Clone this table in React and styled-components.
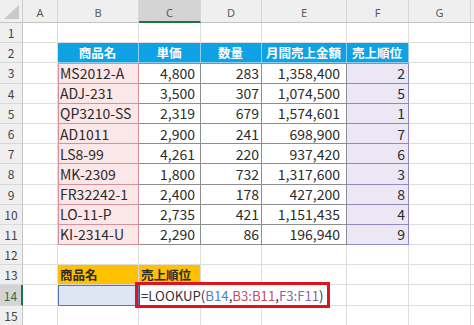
import styled, { createGlobalStyle } from "styled-components";

const GlobalStyle = createGlobalStyle`
  html, body {
    margin: 0;
    padding: 0;
    background: #ffffff;
  }
  body {
    width: 474px;
    height: 325px;
    overflow: hidden;
    font-family: "Noto Sans CJK JP", "Noto Sans", sans-serif;
  }
`;

const columns = ["A", "B", "C", "D", "E", "F", "G", ""];

const headers = ["商品名", "単価", "数量", "月間売上金額", "売上順位"];

const products = [
  ["MS2012-A", "4,800", "283", "1,358,400", "2"],
  ["ADJ-231", "3,500", "307", "1,074,500", "5"],
  ["QP3210-SS", "2,319", "679", "1,574,601", "1"],
  ["AD1011", "2,900", "241", "698,900", "7"],
  ["LS8-99", "4,261", "220", "937,420", "6"],
  ["MK-2309", "1,800", "732", "1,317,600", "3"],
  ["FR32242-1", "2,400", "178", "427,200", "8"],
  ["LO-11-P", "2,735", "421", "1,151,435", "4"],
  ["KI-2314-U", "2,290", "86", "196,940", "9"],
];

// right padding per numeric column (C, D, E, F)
const numberPad = [5, 2, 6, 3];

const tones = {
  plain: { bg: "#ffffff", line: "#dedede" },
  head: { bg: "#0ea2e4", line: "#8fd0ef", color: "#ffffff" },
  name: { bg: "#fbe6e8", line: "#d8919c" },
  num: { bg: "#ffffff", line: "#8e8e8e" },
  rank: { bg: "#ebe7f5", line: "#9587c2" },
  label: { bg: "#ffc000", line: "#d9d9d9" },
  input: { bg: "#dde6f2", line: "#5676ad" },
};

const Sheet = styled.div`
  display: grid;
  grid-template-columns: 23px 35px 81px 62px 61px 85px 62px 62px 1fr;
  grid-template-rows: 23px repeat(15, 20.2px);
  width: 474px;
  height: 325px;
  overflow: hidden;
`;

const Corner = styled.div`
  display: flex;
  align-items: flex-end;
  justify-content: flex-end;
  padding: 0 3px 3px 0;
  background: #efefef;
  border-right: 1px solid #cfcfcf;
  border-bottom: 1px solid #c4c4c4;
`;

const ColHead = styled.div`
  display: flex;
  align-items: center;
  justify-content: center;
  padding-top: 3px;
  background: ${(p) => (p.$active ? "#d4d4d4" : "#efefef")};
  border-right: 1px solid #d6d6d6;
  border-bottom: ${(p) => (p.$active ? "2px solid #217346" : "1px solid #c4c4c4")};
  color: #5a5a5a;
  font-family: "Noto Sans", sans-serif;
  font-size: 11px;
`;

const RowHead = styled.div`
  display: flex;
  align-items: center;
  justify-content: center;
  background: ${(p) => (p.$active ? "#d4d4d4" : "#efefef")};
  border-right: ${(p) => (p.$active ? "2px solid #217346" : "1px solid #c4c4c4")};
  border-bottom: 1px solid #d8d8d8;
  color: ${(p) => (p.$active ? "#2e6b47" : "#444444")};
  font-size: 12px;
`;

const Cell = styled.div`
  position: relative;
  display: flex;
  align-items: center;
  justify-content: ${(p) =>
    p.$align === "right" ? "flex-end" : p.$align === "center" ? "center" : "flex-start"};
  padding: 0 ${(p) => p.$pr ?? 3}px 0 2px;
  min-width: 0;
  white-space: nowrap;
  background: ${(p) => tones[p.$tone].bg};
  color: ${(p) => tones[p.$tone].color || "#2b2b2b"};
  font-size: ${(p) => (p.$tone === "head" || p.$tone === "label" ? "12.5px" : "14px")};
  font-weight: ${(p) => (p.$tone === "head" || p.$tone === "label" ? 700 : 400)};
  border-right: 1px solid
    ${(p) => (p.$open ? "transparent" : tones[p.$tone].line)};
  border-bottom: 1px solid ${(p) => tones[p.$tone].line};
  box-shadow: ${(p) =>
    [
      p.$left && `inset 1px 0 0 ${tones[p.$tone].line}`,
      p.$top && `inset 0 1px 0 ${tones[p.$tone].line}`,
    ]
      .filter(Boolean)
      .join(", ") || "none"};
`;

const FormulaCell = styled(Cell)`
  z-index: 1;
  overflow: visible;
  box-shadow: inset 1px 0 0 #2f6b45;
`;

const Formula = styled.span`
  color: #333333;
  font-size: 13.2px;
`;

const Ref = styled.span`
  color: ${(p) => p.$color};
`;

const Callout = styled.div`
  position: absolute;
  left: -4px;
  top: -3px;
  width: 195px;
  height: 26px;
  box-sizing: border-box;
  border: 3px solid #e1141c;
  pointer-events: none;
`;

function rowCells(r) {
  const cells = Array.from({ length: 8 }, () => ({ tone: "plain" }));

  if (r === 2) {
    headers.forEach((text, i) => {
      cells[i + 1] = { tone: "head", text, align: "center" };
    });
  }

  if (r >= 3 && r <= 11) {
    const item = products[r - 3];
    cells[1] = { tone: "name", text: item[0], left: true, top: r === 3 };
    for (let i = 1; i < 5; i++) {
      cells[i + 1] = {
        tone: i === 4 ? "rank" : "num",
        text: item[i],
        align: "right",
        pr: numberPad[i - 1],
        top: r === 3,
      };
    }
  }

  if (r === 13) {
    cells[1] = { tone: "label", text: "商品名" };
    cells[2] = { tone: "label", text: "売上順位" };
  }

  if (r === 14) {
    cells[1] = { tone: "input", left: true, top: true };
    cells[2] = { tone: "plain", formula: true, open: true };
    cells[3] = { tone: "plain", open: true };
  }

  return cells;
}

function CornerMark() {
  return (
    <svg width="15" height="14" viewBox="0 0 15 14">
      <polygon points="15,0 15,14 0,14" fill="#c9c9c9" />
    </svg>
  );
}

export default function App() {
  const rows = Array.from({ length: 15 }, (_, i) => i + 1);

  return (
    <>
      <GlobalStyle />
      <Sheet>
        <Corner>
          <CornerMark />
        </Corner>
        {columns.map((c, i) => (
          <ColHead key={`h${i}`} $active={c === "C"}>
            {c}
          </ColHead>
        ))}

        {rows.map((r) => [
          <RowHead key={`r${r}`} $active={r === 14}>
            {r}
          </RowHead>,
          ...rowCells(r).map((cell, i) =>
            cell.formula ? (
              <FormulaCell key={`${r}-${i}`} $tone="plain" $open>
                <Formula>
                  =LOOKUP(<Ref $color="#4a7fc0">B14</Ref>,
                  <Ref $color="#c0525c">B3:B11</Ref>,
                  <Ref $color="#8068a8">F3:F11</Ref>)
                </Formula>
                <Callout />
              </FormulaCell>
            ) : (
              <Cell
                key={`${r}-${i}`}
                $tone={cell.tone}
                $align={cell.align}
                $pr={cell.pr}
                $left={cell.left}
                $top={cell.top}
                $open={cell.open}
              >
                {cell.text}
              </Cell>
            )
          ),
        ])}
      </Sheet>
    </>
  );
}
